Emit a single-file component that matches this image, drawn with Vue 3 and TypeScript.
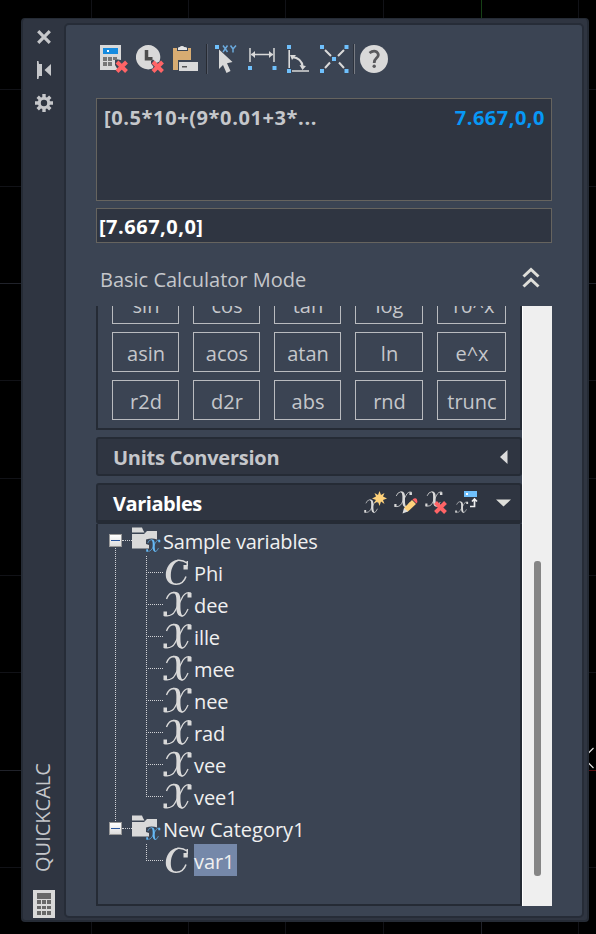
<script setup lang="ts">
import { ref } from 'vue'

interface Entry { name: string; kind: 'constant' | 'function' }
interface Category { name: string; items: Entry[] }

const functionRows: string[][] = [
  ['sin', 'cos', 'tan', 'log', '10^x'],
  ['asin', 'acos', 'atan', 'ln', 'e^x'],
  ['r2d', 'd2r', 'abs', 'rnd', 'trunc'],
]

const fn = (name: string): Entry => ({ name, kind: 'function' })

const categories: Category[] = [
  {
    name: 'Sample variables',
    items: [{ name: 'Phi', kind: 'constant' }, ...['dee', 'ille', 'mee', 'nee', 'rad', 'vee', 'vee1'].map(fn)],
  },
  { name: 'New Category1', items: [{ name: 'var1', kind: 'constant' }] },
]

const selected = ref('var1')
</script>

<template>
  <div class="canvas">
    <svg class="grid-lines" width="596" height="934" viewBox="0 0 596 934" shape-rendering="crispEdges">
      <path d="M0 89.5H596M0 186.5H596M0 380.5H596M0 478.5H596M0 575.5H596M0 672.5H596M0 867.5H596M91.5 0V934M188.5 0V934M285.5 0V934M383.5 0V934M578.5 0V934" stroke="#111217" />
      <path d="M0 283.5H596M0 770.5H22" stroke="#20222a" />
      <path d="M481.5 0V20" stroke="#164016" />
      <path d="M481.5 921V934" stroke="#20222a" />
      <path d="M588 770.5H596" stroke="#5a0d10" />
      <path d="M593.500 748L588 753.500M588 762.500L593.500 768" stroke="#ddd" stroke-width="1.200" shape-rendering="auto" />
    </svg>

    <main class="palette">
      <aside class="rail">
        <svg width="20" height="66" viewBox="0 0 20 66">
          <path d="M4.200 5.200L15.800 16.800M15.800 5.200L4.200 16.800" stroke="#c6c7ca" stroke-width="3.200" />
          <path d="M3 35H4.500L5 38H8V50H5L4.500 53H3Z" fill="#c6c7ca" />
          <path d="M10.500 44L17 38V50Z" fill="#c6c7ca" />
        </svg>
        <svg class="gear" width="20" height="20" viewBox="-10 -10 20 20" stroke="#c6c7ca" fill="none">
          <circle r="4.700" stroke-width="3" />
          <path d="M0 -9V-5M0 9V5M-9 0H-5M9 0H5M-6.300 -6.300L-4 -4M6.300 6.300L4 4M-6.300 6.300L-4 4M6.300 -6.300L4 -4" stroke-width="3.400" />
        </svg>
        <span class="rail-title">QUICKCALC</span>
        <svg class="calculator" width="22" height="28" viewBox="0 0 22 28" shape-rendering="crispEdges">
          <path d="M0 0H22V28H0Z" fill="#d9d9d9" />
          <path d="M4 3H18V9H4ZM4 10H8V14H4ZM9 10H13V14H9ZM14 10H18V14H14ZM4 16H8V19H4ZM9 16H13V19H9ZM14 16H18V19H14ZM4 21H8V25H4ZM9 21H13V25H9ZM14 21H18V25H14Z" fill="#686868" />
        </svg>
      </aside>

      <section class="content">
        <div class="toolbar">
          <svg width="28" height="28" viewBox="0 0 28 28">
            <path d="M0 0H21V15L15 14V20L18 25H0Z" fill="#d9d9d9" />
            <path d="M3 3H18V9H3Z" fill="#168bdf" /><path d="M7 5H9V7H7Z" fill="#fff" />
            <path d="M3 12H7V16H3ZM8 12H12V16H8ZM13 12H17V15H13ZM3 17H7V21H3ZM8 17H12V21H8Z" fill="#777" />
            <path d="M17 17L26.500 26.500M26.500 17L17 26.500" stroke="#ff6466" stroke-width="4" />
          </svg>
          <svg width="28" height="28" viewBox="0 0 28 28">
            <path d="M12.200 0A12.200 12.200 0 1 0 16.500 23.600L17.500 21.700L15 18.500V16L17 14.500L20.500 18L23.500 16.500A12.200 12.200 0 0 0 12.200 0Z" fill="#d9d9d9" />
            <path d="M10.500 5V13.700H16.500" stroke="#4c4c4c" stroke-width="3.500" fill="none" />
            <path d="M17 17L26.500 26.500M26.500 17L17 26.500" stroke="#ff6466" stroke-width="4" />
          </svg>
          <svg width="28" height="28" viewBox="0 0 28 28">
            <path d="M1 3H5V6H16V3H19V15H6V25H1Z" fill="#d8ac72" />
            <path d="M6 5V3Q6 2 8 2Q8 1 10 1Q12 1 12 2Q15 2 15 3V5Z" fill="#e5e5e5" />
            <path d="M7 17H26V26H7Z" fill="#d9d9d9" /><path d="M10 21H15V22.500H10Z" fill="#555" />
          </svg>
          <i class="separator"></i>
          <svg width="28" height="28" viewBox="0 0 28 28">
            <path d="M1 0H5V4H1Z" fill="#6fc0fc" />
            <path d="M9 0.500L13.500 7M13.500 0.500L9 7M16.500 0.500L19 4L22 0.500M19 4V7.500" stroke="#6ba9dc" stroke-width="1.500" fill="none" />
            <path d="M5 4.500L18.500 17L13 18.300L16.500 26L12.500 28L9 20L5 24Z" fill="#d9d9d9" />
          </svg>
          <svg width="30" height="28" viewBox="0 0 30 28">
            <path d="M2 3V17M26 3V17M3 9.500H25" stroke="#d9d9d9" stroke-width="1.500" />
            <path d="M3 9.500L7 6V13ZM25 9.500L21 6V13Z" fill="#d9d9d9" />
            <path d="M0 21H4V25H0ZM24.500 21H28.500V25H24.500Z" fill="#6fc0fc" />
          </svg>
          <svg width="28" height="28" viewBox="0 0 28 28">
            <path d="M5.200 5V23M8 26H25" stroke="#d9d9d9" stroke-width="1.600" />
            <path d="M8 12Q18 13 18.700 22" stroke="#d9d9d9" stroke-width="2" fill="none" />
            <path d="M6 10L12 10L8 15ZM15.500 20L22 21L18.500 25Z" fill="#d9d9d9" />
            <path d="M3 0H7V4H3ZM3 24H7V28H3Z" fill="#6fc0fc" />
          </svg>
          <svg width="30" height="28" viewBox="0 0 30 28">
            <path d="M5 5L11 11M24 5L18 11M5 23L10 17.500M24 23L19 17.500" stroke="#d9d9d9" stroke-width="2" />
            <path d="M0 0H4V4H0ZM24.500 0H28.500V4H24.500ZM12 12H16V16H12ZM0 24H4V28H0ZM24.500 24H28.500V28H24.500Z" fill="#6fc0fc" />
          </svg>
          <i class="separator light"></i>
          <svg width="28" height="28" viewBox="0 0 28 28">
            <circle cx="14" cy="14" r="14" fill="#d9d9d9" />
            <path d="M9.500 8Q13.500 5 16.800 7Q20 10 16.500 13Q14.200 15 14.200 18" stroke="#59595c" stroke-width="2.800" fill="none" />
            <circle cx="14.200" cy="21.300" r="1.700" fill="#59595c" />
          </svg>
        </div>

        <div class="history">
          <span class="expression">[0.5*10+(9*0.01+3*...</span>
          <span class="result">7.667,0,0</span>
        </div>
        <div class="entry"><span>[7.667,0,0]</span></div>

        <div class="mode">
          <span>Basic Calculator Mode</span>
          <svg width="18" height="22" viewBox="0 0 18 22">
            <path d="M1.500 9.500L9 2.500L16.500 9.500M1.500 19.500L9 12.500L16.500 19.500" stroke="#deded9" stroke-width="3" fill="none" />
          </svg>
        </div>

        <div class="scroller">
          <div class="sections">
            <div class="functions">
              <template v-for="row in functionRows" :key="row[0]">
                <button v-for="name in row" :key="name" type="button">{{ name }}</button>
              </template>
            </div>

            <header class="bar units">
              <span>Units Conversion</span>
              <svg width="8" height="14" viewBox="0 0 8 14"><path d="M7.500 0V14L0 7Z" fill="#dcdcdc" /></svg>
            </header>

            <header class="bar variables">
              <span>Variables</span>
              <svg class="new" width="24" height="24" viewBox="0 0 24 24">
                <g transform="translate(0 8) scale(.54)" class="italic-x"><use href="#glyph-x" /></g>
                <path d="M15.500 0L17 4L20.500 2L19 5.500L23 7.500L19 9L20.500 13L17 10.500L15.500 15L14 10.500L10 12.500L12 9L8 7.500L12 5.500L10.500 2L14 4Z" fill="#ffd27b" />
              </svg>
              <svg class="edit" width="24" height="24" viewBox="0 0 24 24">
                <g transform="scale(.63)" class="italic-x"><use href="#glyph-x" /></g>
                <path d="M10 17L18 9L22 13L14 20.500L10 21Z" fill="#ffd27b" /><path d="M18.500 8.500Q21.500 6 23 8.500Q24 11 22.500 12.500Z" fill="#ff6466" /><path d="M10 17L14 20.500L8.500 22.500Z" fill="#ddd" />
              </svg>
              <svg class="remove" width="24" height="24" viewBox="0 0 24 24">
                <g transform="scale(.61)" class="italic-x"><use href="#glyph-x" /></g>
                <path d="M10.500 11.500L20.500 21.500M20.500 11.500L10.500 21.500" stroke="#ff6466" stroke-width="4" />
              </svg>
              <svg class="return" width="24" height="24" viewBox="0 0 24 24">
                <g transform="translate(0 10) scale(.46)" class="italic-x"><use href="#glyph-x" /></g>
                <path d="M9 0H22V6H9Z" fill="#6fc0fc" /><path d="M11 2H13V4H11Z" fill="#fff" />
                <path d="M15 15.500H19.500V9M17 10.500L19.500 8L22 10.500" stroke="#eee" stroke-width="1.700" fill="none" />
              </svg>
              <svg class="caret" width="15" height="8" viewBox="0 0 15 8"><path d="M0 .5H15L7.500 7.500Z" fill="#deded9" /></svg>
            </header>

            <div class="tree">
              <div v-for="category in categories" :key="category.name" class="category">
                <div class="node parent">
                  <i class="expander"></i>
                  <i class="stub"></i>
                  <svg width="30" height="26" viewBox="0 0 30 26">
                    <path d="M0 .5H10Q11 3.500 12.500 5.500H0ZM0 7H12L15 4H25V12.500Q20 10.500 14 12.500V17L17 18V21.500H0Z" fill="#d9d9d9" />
                    <g transform="translate(14 12) scale(.5)" class="blue-x"><use href="#glyph-x" /></g>
                  </svg>
                  <span>{{ category.name }}</span>
                </div>
                <div class="children">
                  <div v-for="item in category.items" :key="item.name" class="node child">
                    <i class="branch"></i>
                    <svg v-if="item.kind === 'constant'" width="29" height="27" viewBox="0 0 29 27">
                      <path d="M24 4Q20 .8 14.500 1.300M12 25.200Q20 26 23 17.500" fill="none" stroke="#d9d9d9" stroke-width="1.500" />
                      <path d="M15 .8C7 1.500 2.800 9 2.800 16C2.800 22 7 26 13 26V24.700C9 24 7.800 21 7.800 16C8 9 11 3.500 15.500 2Z" fill="#d9d9d9" />
                      <path d="M20.500 6H24.800V10.500H20.500ZM23.500 2H25V7H23.500Z" fill="#d9d9d9" />
                    </svg>
                    <svg v-else width="29" height="27" viewBox="0 0 29 27" class="italic-x"><use href="#glyph-x" /></svg>
                    <span :class="{ selected: item.name === selected }">{{ item.name }}</span>
                  </div>
                </div>
              </div>
            </div>
          </div>
          <div class="scrollbar"><div class="thumb"></div></div>
        </div>
      </section>
    </main>

    <svg class="defs" width="0" height="0">
      <defs>
        <g id="glyph-x">
          <path d="M3.500 8Q6 1.500 10.500 1.500C15.500 2 15 9 15 14C15 21 16 25 19 25Q22 25 25 18M28 2Q22 0 18.500 8L12 20Q9 26 1 24.500" fill="none" stroke="currentColor" stroke-width="1.300" />
          <path d="M10 1C16 0 17.800 4 17.500 11C17.200 19 17.700 23 20 25.500C15 26 13.200 22 13.300 15C13.500 8 14 3 10 1Z" fill="currentColor" />
          <path d="M24.500 2H28.500V6.500H24.500ZM.5 20.500H4V25H.5Z" fill="currentColor" />
        </g>
      </defs>
    </svg>
  </div>
</template>

<style>
body { background: #000; overflow: hidden; }
</style>

<style scoped>
* { box-sizing: border-box; }
svg { display: block; flex: none; }
i { display: block; flex: none; }
.canvas {
  position: relative;
  width: 596px;
  height: 934px;
  padding: 18px 0 0 21px;
  background: #000;
  overflow: hidden;
  font-family: "Open Sans", "Noto Sans", sans-serif;
  font-size: 20px;
  color: #c5c7cb;
  white-space: nowrap;
}
.grid-lines, .defs { position: absolute; left: 0; top: 0; }
.palette {
  position: relative;
  display: flex;
  width: 568px;
  height: 904px;
  padding: 4px 4px 3px 1px;
  background: #2f3541;
  border: 2px solid #252b35;
  border-top-width: 1px;
  border-radius: 4px;
}
.rail { flex: none; width: 40px; display: flex; flex-direction: column; align-items: center; padding-top: 3px; }
.gear { margin-top: 1px; }
.rail-title {
  flex: none;
  writing-mode: vertical-rl;
  transform: rotate(180deg);
  margin-top: 647px;
  margin-right: 3px;
  height: 112px;
  line-height: 24px;
}
.calculator { margin-top: 18px; }
.content {
  flex: none;
  width: 520px;
  height: 895px;
  padding: 20px 0 0 30px;
  background: #3b4453;
  border: 2px solid #262c37;
  border-radius: 5px;
}
.toolbar {
  display: grid;
  grid-template-columns: 36px 36px 34px 8px 34px 36px 36px 34px 6px 28px;
  height: 53px;
  padding-left: 4px;
}
.separator { width: 1px; height: 30px; margin-top: -1px; background: #272b33; box-shadow: 1px 0 #545b69; }
.separator.light { background: #777b83; box-shadow: -1px 0 #2c323d; }
.history, .entry { width: 456px; background: #2f3541; border: 1px solid #66645f; font-weight: 700; }
.history { height: 103px; display: flex; justify-content: space-between; padding: 4px 7px; line-height: 30px; }
.expression { letter-spacing: .6px; }
.result, .entry { letter-spacing: .5px; }
.result { color: #0798f6; margin-right: -1px; }
.entry { height: 35px; margin-top: 7px; padding: 3px 2px; line-height: 30px; color: #fff; }
.mode { height: 63px; width: 456px; display: flex; justify-content: space-between; padding: 24px 12px 0 4px; line-height: 26px; }
.scroller { display: flex; width: 456px; height: 600px; }
.sections { width: 426px; height: 600px; overflow: hidden; }
.functions {
  display: grid;
  grid-template-columns: 67px 67px 67px 68px 69px;
  grid-auto-rows: 40px;
  gap: 8px 14px;
  height: 146px;
  margin-top: -22px;
  padding: 0 14px;
  border: 2px solid #252b35;
  border-top: 0;
}
.functions button {
  margin: 0;
  padding: 3px 0 0 1px;
  background: transparent;
  border: 1px solid #b9bbbf;
  border-radius: 0;
  font: inherit;
  line-height: 28px;
  color: inherit;
}
.bar {
  display: flex;
  align-items: center;
  width: 426px;
  background: #2f3541;
  border: 2px solid #252b35;
  border-radius: 3px;
  font-weight: 700;
  padding-left: 15px;
}
.units { height: 39px; margin-top: 7px; letter-spacing: -.25px; }
.units span { padding-top: 1px; }
.units svg { margin-left: auto; margin-right: 12px; }
.variables { height: 41px; margin-top: 7px; color: #fff; border-bottom-width: 4px; letter-spacing: -.45px; }
.variables span { padding-top: 1px; }
.new { margin-left: auto; margin-right: 6px; }
.edit { margin-right: 7px; }
.remove { margin-right: 6px; }
.return { margin-right: 17px; }
.caret { margin-right: 9px; }
.tree { height: 382px; border: 2px solid #252b35; border-top: 0; color: #f0f0f0; }
.node { display: flex; align-items: center; height: 32px; }
.parent { padding-left: 11px; }
.parent span { margin-left: 1px; line-height: 29px; padding-top: 2px; letter-spacing: -.2px; }
.category:last-child .parent span { letter-spacing: 0; }
.expander {
  width: 13px;
  height: 13px;
  border: 1px solid #999;
  background: linear-gradient(#2a559c, #2a559c) center / 9px 1px no-repeat, linear-gradient(#fff, #ddd);
}
.stub { width: 10px; border-top: 1px dotted #d0d2d6; }
.category { background: repeating-linear-gradient(#d0d2d6 0 1px, transparent 1px 2px) 17px 24px / 1px 264px no-repeat; }
.category:last-child { background-position: 17px 0; background-size: 1px 10px; }
.child { padding-left: 48px; background: repeating-linear-gradient(#d0d2d6 0 1px, transparent 1px 2px) 48px 0 / 1px 32px no-repeat; }
.child:last-child { background-size: 1px 16px; }
.branch { width: 17px; border-top: 1px dotted #d0d2d6; }
.child span { margin-left: 2px; height: 32px; padding-top: 2px; line-height: 31px; letter-spacing: -.1px; }
.child .selected { background: #7588a9; padding-right: 3px; }
.italic-x { color: #d9d9d9; }
.blue-x { color: #65b9f5; }
.scrollbar { width: 30px; height: 600px; padding: 255px 11px 0; background: #efefef; border-left: 1px solid #fff; }
.thumb { width: 7px; height: 315px; border-radius: 3px; background: #858585; }
</style>
